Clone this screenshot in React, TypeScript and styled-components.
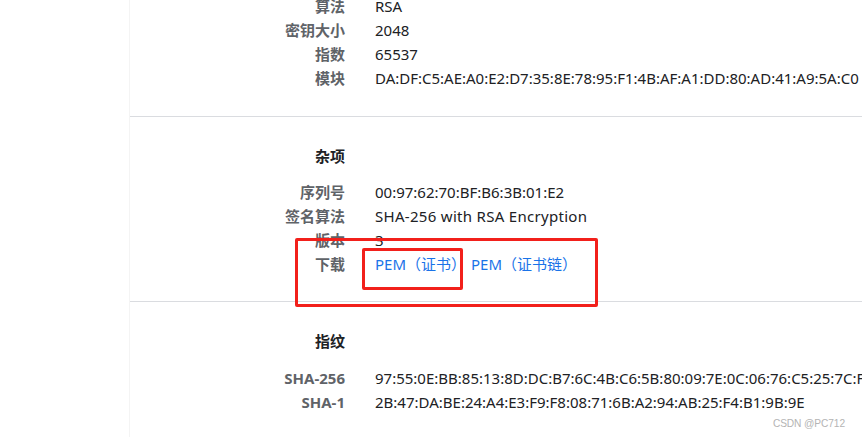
import React from "react";
import styled, { createGlobalStyle } from "styled-components";

const GlobalStyle = createGlobalStyle`
  html, body {
    margin: 0;
    padding: 0;
    background: #ffffff;
    overflow: hidden;
  }
  body {
    font-family: "Noto Sans", "Noto Sans CJK SC", sans-serif;
  }
`;

type Row = { label: string; value: React.ReactNode; wide?: boolean };

const Page = styled.div`
  position: relative;
  width: 862px;
  height: 437px;
  overflow: hidden;
`;

const Viewer = styled.div`
  margin-left: 129px;
  margin-top: -6px;
  border-left: 1px solid #f4f4f4;
  min-height: 460px;
`;

const Section = styled.section<{ $top: number; $bottom: number; $divider?: boolean }>`
  padding-top: ${(p) => p.$top}px;
  padding-bottom: ${(p) => p.$bottom}px;
  border-bottom: ${(p) => (p.$divider ? "1px solid #dadce0" : "none")};
`;

const Heading = styled.div<{ $gap: number }>`
  width: 215px;
  text-align: right;
  font-family: "Noto Sans CJK SC", sans-serif;
  font-size: 15px;
  font-weight: 700;
  line-height: 24px;
  height: 24px;
  color: #202124;
  margin-bottom: ${(p) => p.$gap}px;
`;

const Grid = styled.div`
  display: grid;
  grid-template-columns: 215px 1fr;
  column-gap: 30px;
  grid-auto-rows: 24px;
  align-items: center;
`;

const Label = styled.div`
  text-align: right;
  font-family: "Noto Sans", "Noto Sans CJK SC", sans-serif;
  font-size: 15px;
  line-height: 24px;
  height: 24px;
  font-weight: 700;
  color: #5f6368;
  white-space: nowrap;
`;

const Value = styled.div<{ $wide?: boolean }>`
  font-family: "Noto Sans", "Noto Sans CJK SC", sans-serif;
  font-size: 15px;
  letter-spacing: ${(p) => (p.$wide ? "0.3px" : "0")};
  line-height: 24px;
  height: 24px;
  color: #202124;
  white-space: nowrap;
  overflow: hidden;
`;

const Links = styled.div`
  display: flex;
  gap: 5px;
`;

const Link = styled.a`
  color: #1a73e8;
  text-decoration: none;
  font-size: 15px;
  cursor: pointer;
`;

const Mark = styled.div<{ $l: number; $t: number; $w: number; $h: number }>`
  position: absolute;
  left: ${(p) => p.$l}px;
  top: ${(p) => p.$t}px;
  width: ${(p) => p.$w}px;
  height: ${(p) => p.$h}px;
  border: 3px solid #f2201b;
  border-radius: 2px;
  box-sizing: border-box;
  pointer-events: none;
`;

const Watermark = styled.div`
  position: absolute;
  right: 17px;
  bottom: 8px;
  font-family: "Liberation Sans", Arial, sans-serif;
  font-size: 10.2px;
  letter-spacing: -0.1px;
  color: #b4b4b4;
`;

const keyRows: Row[] = [
  { label: "算法", value: "RSA" },
  { label: "密钥大小", value: "2048" },
  { label: "指数", value: "65537" },
  {
    label: "模块",
    value: "DA:DF:C5:AE:A0:E2:D7:35:8E:78:95:F1:4B:AF:A1:DD:80:AD:41:A9:5A:C0",
  },
];

const miscRows: Row[] = [
  { label: "序列号", value: "00:97:62:70:BF:B6:3B:01:E2" },
  { label: "签名算法", value: "SHA-256 with RSA Encryption", wide: true },
  { label: "版本", value: "3" },
  {
    label: "下载",
    value: (
      <Links>
        <Link>PEM（证书）</Link>
        <Link>PEM（证书链）</Link>
      </Links>
    ),
  },
];

const printRows: Row[] = [
  {
    label: "SHA-256",
    value: "97:55:0E:BB:85:13:8D:DC:B7:6C:4B:C6:5B:80:09:7E:0C:06:76:C5:25:7C:F",
  },
  { label: "SHA-1", value: "2B:47:DA:BE:24:A4:E3:F9:F8:08:71:6B:A2:94:AB:25:F4:B1:9B:9E" },
];

const Rows: React.FC<{ rows: Row[] }> = ({ rows }) => (
  <Grid>
    {rows.map((r) => (
      <React.Fragment key={r.label}>
        <Label>{r.label}</Label>
        <Value $wide={r.wide}>{r.value}</Value>
      </React.Fragment>
    ))}
  </Grid>
);

const App: React.FC = () => {
  return (
    <Page>
      <GlobalStyle />
      <Viewer>
        <Section $top={0} $bottom={26} $divider>
          <Rows rows={keyRows} />
        </Section>
        <Section $top={27} $bottom={25} $divider>
          <Heading $gap={12}>杂项</Heading>
          <Rows rows={miscRows} />
        </Section>
        <Section $top={27} $bottom={0}>
          <Heading $gap={13}>指纹</Heading>
          <Rows rows={printRows} />
        </Section>
      </Viewer>
      <Mark $l={295} $t={238} $w={303} $h={69} />
      <Mark $l={362} $t={248} $w={101} $h={42} />
      <Watermark>CSDN @PC712</Watermark>
    </Page>
  );
};

export default App;
